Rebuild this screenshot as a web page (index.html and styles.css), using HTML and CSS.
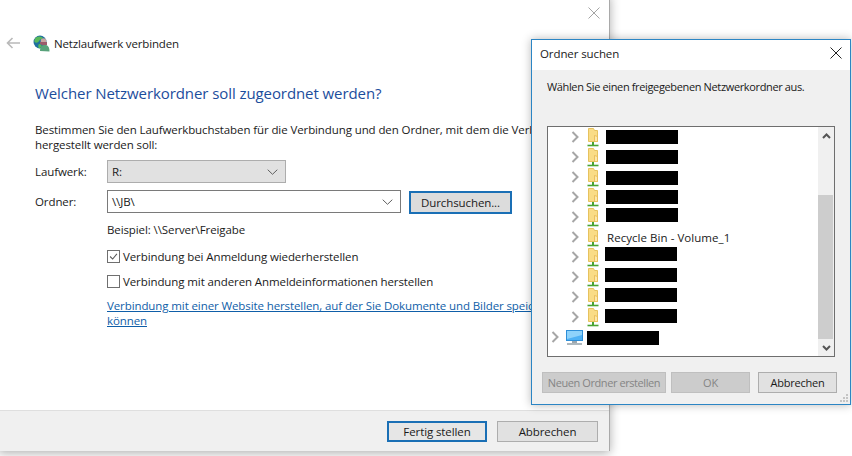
FILE: index.html
```html
<!DOCTYPE html>
<html lang="de">
<head>
<meta charset="utf-8">
<title>Netzlaufwerk verbinden</title>
<link rel="stylesheet" href="styles.css">
</head>
<body>
<svg class="defs" width="0" height="0">
  <symbol id="chev-r" viewBox="0 0 8 12"><path d="M1.5 1l5 5-5 5" fill="none" stroke="#a6a6a6" stroke-width="2"/></symbol>
  <symbol id="chev-d" viewBox="0 0 11 6"><path d="M.7.7l4.8 4.6L10.3.7" fill="none" stroke="#606060" stroke-width="1"/></symbol>
  <symbol id="x" viewBox="0 0 12 12"><path d="M.5.5l11 11M11.5.5l-11 11" fill="none" stroke="currentColor" stroke-width="1"/></symbol>
  <symbol id="share" viewBox="0 0 12 19">
    <path d="M1.5 .5h5l1 2h3v11h-9z" fill="#f9dc86" stroke="#e6c25e"/>
    <path d="M7.5 7.5l3 1v5h-3z" fill="#fbe9ad" stroke="#e8b84f" stroke-width=".8"/>
    <path d="M6 14v3" stroke="#4aa335" stroke-width="2"/>
    <path d="M.5 17.5h11" stroke="#4aa335" stroke-width="1.6"/>
  </symbol>
</svg>

<section class="wizard">
  <div class="wiz-cap"><svg class="wiz-x"><use href="#x"/></svg></div>
  <div class="wiz-nav">
    <svg class="back" viewBox="0 0 14 12"><path d="M6.5 1L1.5 6l5 5M1.5 6H14" fill="none" stroke="#b9b9b9" stroke-width="1.6"/></svg>
    <svg class="globe" viewBox="0 0 17 17">
      <circle cx="7" cy="7" r="6.5" fill="#1f6f9e"/>
      <path d="M3 2.5c3-2 6-1 7 .5-1 1.500-3 1-4 3S3 8 1.500 7C1 5 2 3.500 3 2.500zM6 9c2 0 3 1 2.500 3L6 13.500C5 12 5 10 6 9z" fill="#58b95a"/>
      <circle cx="10.500" cy="6" r="2.800" fill="#c9a5a0"/>
      <path d="M7 7h7v3l-3 1-4-2z" fill="#9b5a6b"/>
      <path d="M7 16c0-5 2.500-6 5-6s4.500 1.500 4.500 6.500z" fill="#58a27a"/>
    </svg>
    <span class="wiz-title">Netzlaufwerk verbinden</span>
  </div>
  <div class="wiz-body">
    <h1 class="heading">Welcher Netzwerkordner soll zugeordnet werden?</h1>
    <p class="desc">Bestimmen Sie den Laufwerkbuchstaben für die Verbindung und den Ordner, mit dem die Verbindung<br>hergestellt werden soll:</p>
    <div class="form-row form-row-first">
      <label class="form-label">Laufwerk:</label>
      <div class="combo combo-drive"><span>R:</span><svg class="combo-arrow"><use href="#chev-d"/></svg></div>
    </div>
    <div class="form-row">
      <label class="form-label">Ordner:</label>
      <div class="combo combo-path"><span>\\JB\</span><svg class="combo-arrow"><use href="#chev-d"/></svg></div>
      <button class="btn btn-browse" type="button">Durchsuchen...</button>
    </div>
    <div class="indent">
      <p class="hint">Beispiel: \\Server\Freigabe</p>
      <div class="check check-first">
        <span class="box"><svg viewBox="0 0 13 13"><path d="M2.500 6.500l3 3 5-6" fill="none" stroke="#5a5a5a" stroke-width="1.300"/></svg></span>
        <span>Verbindung bei Anmeldung wiederherstellen</span>
      </div>
      <div class="check">
        <span class="box"></span>
        <span>Verbindung mit anderen Anmeldeinformationen herstellen</span>
      </div>
      <a class="link" href="#">Verbindung mit einer Website herstellen, auf der Sie Dokumente und Bilder speichern<br>können</a>
    </div>
  </div>
  <div class="wiz-foot">
    <button class="btn btn-default" type="button">Fertig stellen</button>
    <button class="btn btn-cancel" type="button">Abbrechen</button>
  </div>
</section>

<section class="dialog">
  <div class="dlg-cap"><span>Ordner suchen</span><svg class="dlg-x"><use href="#x"/></svg></div>
  <div class="dlg-body">
    <p class="dlg-msg">Wählen Sie einen freigegebenen Netzwerkordner aus.</p>
    <div class="tree">
      <ul class="tree-list">
        <li class="row"><svg class="tw"><use href="#chev-r"/></svg><svg class="fld"><use href="#share"/></svg><span class="redact"></span></li>
        <li class="row"><svg class="tw"><use href="#chev-r"/></svg><svg class="fld"><use href="#share"/></svg><span class="redact"></span></li>
        <li class="row"><svg class="tw"><use href="#chev-r"/></svg><svg class="fld"><use href="#share"/></svg><span class="redact down1"></span></li>
        <li class="row"><svg class="tw"><use href="#chev-r"/></svg><svg class="fld"><use href="#share"/></svg><span class="redact"></span></li>
        <li class="row"><svg class="tw"><use href="#chev-r"/></svg><svg class="fld"><use href="#share"/></svg><span class="redact up2"></span></li>
        <li class="row"><svg class="tw"><use href="#chev-r"/></svg><svg class="fld"><use href="#share"/></svg><span class="row-text">Recycle Bin - Volume_1</span></li>
        <li class="row"><svg class="tw"><use href="#chev-r"/></svg><svg class="fld"><use href="#share"/></svg><span class="redact up3 left1"></span></li>
        <li class="row"><svg class="tw"><use href="#chev-r"/></svg><svg class="fld"><use href="#share"/></svg><span class="redact up2 left1"></span></li>
        <li class="row"><svg class="tw"><use href="#chev-r"/></svg><svg class="fld"><use href="#share"/></svg><span class="redact up2 left1"></span></li>
        <li class="row"><svg class="tw"><use href="#chev-r"/></svg><svg class="fld"><use href="#share"/></svg><span class="redact up1 left1"></span></li>
        <li class="row row-top"><svg class="tw"><use href="#chev-r"/></svg>
          <svg class="pc" viewBox="0 0 17 15">
            <rect x="0.500" y="0.500" width="16" height="10" fill="#4fb2f5" stroke="#2f8fd8"/>
            <path d="M1 1h15v4L1 9z" fill="#8fd3fb"/>
            <path d="M6 11h5v2H6z" fill="#9aa7b0"/>
            <path d="M1 14h15" stroke="#8c9aa3" stroke-width="1.400"/>
          </svg>
          <span class="redact down1"></span></li>
      </ul>
      <div class="scroll">
        <div class="sb-btn"><svg class="sb-up" viewBox="0 0 9 6"><path d="M1 5l3.500-3.500L8 5" fill="none" stroke="#555" stroke-width="2"/></svg></div>
        <div class="sb-space"></div>
        <div class="sb-thumb"></div>
        <div class="sb-btn"><svg class="sb-up" viewBox="0 0 9 6"><path d="M1 1l3.500 3.500L8 1" fill="none" stroke="#555" stroke-width="2"/></svg></div>
      </div>
    </div>
    <div class="dlg-btns">
      <button class="btn btn-off btn-new" type="button">Neuen Ordner erstellen</button>
      <button class="btn btn-off btn-ok" type="button">OK</button>
      <button class="btn btn-abort" type="button">Abbrechen</button>
    </div>
  </div>
  <svg class="grip" viewBox="0 0 9 9"><path d="M6 0h2v2H6zM3 3h2v2H3zM6 3h2v2H6zM0 6h2v2H0zM3 6h2v2H3zM6 6h2v2H6z" fill="#c4c4c4"/></svg>
</section>
</body>
</html>
```

FILE: styles.css
```css
* { box-sizing: border-box; }
html, body {
  margin: 0;
  width: 852px;
  height: 456px;
  overflow: hidden;
  background: #fff;
}
body {
  position: relative;
  font-family: "Open Sans", "Noto Sans", sans-serif;
  font-size: 11.500px;
  line-height: 15px;
  letter-spacing: -.1px;
  color: #1a1a1a;
}
p, h1, ul { margin: 0; padding: 0; }
.defs { position: absolute; }

/* Main wizard window */
.wizard {
  position: absolute;
  left: -2px;
  top: -6px;
  width: 612px;
  height: 457px;
  padding-top: 6px;
  padding-left: 2px;
  display: flex;
  flex-direction: column;
  background: #fff;
  border-right: 1px solid #a9a9a9;
  box-shadow: 0 2px 10px rgba(0, 0, 0, .32);
}
.wiz-cap {
  height: 33px;
  display: flex;
  justify-content: flex-end;
  padding: 7px 9px 0 0;
}
.wiz-x { width: 12px; height: 12px; color: #a4a4a4; }
.wiz-nav {
  height: 20px;
  display: flex;
  align-items: center;
  padding-left: 6px;
}
.back { width: 14px; height: 12px; margin-right: 13px; }
.globe { width: 17px; height: 17px; margin-right: 4px; }
.wiz-title { letter-spacing: -.16px; }
.wiz-body {
  flex: 1;
  padding: 30px 0 0 35px;
  white-space: nowrap;
}
.heading {
  font-size: 15px;
  font-weight: 400;
  line-height: 20px;
  letter-spacing: -.08px;
  color: #1c4d9c;
}
.desc { margin-top: 19px; }
.form-row {
  display: flex;
  align-items: flex-start;
  margin-top: 7px;
  height: 23px;
}
.form-row-first { margin-top: 8px; }
.form-label { width: 72px; line-height: 23px; }
.combo {
  height: 23px;
  display: flex;
  align-items: center;
  justify-content: space-between;
  padding: 0 7px 0 4px;
  border: 1px solid #7a7a7a;
  background: #fff;
}
.combo-drive { width: 179px; background: #e1e1e1; border-color: #adadad; }
.combo-path { width: 294px; }
.combo-arrow { width: 11px; height: 6px; }

.btn {
  font: inherit;
  letter-spacing: inherit;
  white-space: nowrap;
  color: #1a1a1a;
  padding: 0;
  background: #e1e1e1;
  border: 1px solid #adadad;
  border-radius: 0;
}
.btn-browse {
  width: 103px;
  height: 23px;
  margin: 1px 0 0 8px;
  border: 2px solid #1a6fb5;
  background: #dcdcdc;
}
.indent { padding-left: 72px; }
.hint { margin-top: 9px; }
.check {
  display: flex;
  align-items: center;
  gap: 3px;
  height: 15px;
  margin-top: 10px;
}
.check-first { margin-top: 12px; }
.box {
  width: 13px;
  height: 13px;
  border: 1px solid #6f6f6f;
  background: #fff;
  display: block;
}
.box svg { display: block; width: 11px; height: 11px; }
.link {
  display: block;
  margin-top: 9px;
  color: #0f5ea8;
  text-decoration: underline;
}
.wiz-foot {
  height: 41px;
  display: flex;
  justify-content: flex-end;
  gap: 10px;
  padding: 10px 11px 0 0;
  background: #f0f0f0;
  border-top: 1px solid #dfdfdf;
}
.btn-default {
  width: 100px;
  height: 21px;
  border: 2px solid #1a6fb5;
  background: #e6e6e6;
}
.btn-cancel { width: 101px; height: 21px; }

/* Folder picker */
.dialog {
  position: absolute;
  left: 531px;
  top: 39px;
  width: 320px;
  height: 366px;
  display: flex;
  flex-direction: column;
  background: #f0f0f0;
  border: 1px solid #2b85c4;
  box-shadow: 0 0 9px rgba(0, 0, 0, .28);
}
.dlg-cap {
  height: 30px;
  flex: none;
  background: #fff;
  display: flex;
  align-items: center;
  justify-content: space-between;
  padding: 0 8px 4px 8px;
}
.dlg-x { width: 12px; height: 12px; color: #222; }
.dlg-body { flex: 1; display: flex; flex-direction: column; }
.dlg-msg {
  margin: 9px 0 0 15px;
  font-size: 11px;
  letter-spacing: -.36px;
}
.tree {
  width: 288px;
  height: 231px;
  margin: 32px 0 0 15px;
  display: flex;
  background: #fff;
  border: 1px solid #6e6e6e;
}
.tree-list { flex: 1; list-style: none; min-width: 0; }
.row {
  height: 20px;
  display: flex;
  align-items: center;
  padding-left: 23px;
}
.row-top { padding-left: 3px; }
.tw { width: 8px; height: 12px; margin-right: 8px; flex: none; }
.row-top .tw { margin-right: 6px; }
.fld { width: 12px; height: 19px; margin-right: 7px; flex: none; }
.pc { width: 17px; height: 15px; margin: 0 4px 0 1px; flex: none; }
.row-text { margin-left: 1px; letter-spacing: .05px; }
.redact {
  position: relative;
  display: block;
  width: 72px;
  height: 14px;
  background: #000;
}
.down1 { top: 1px; }
.up1 { top: -1px; }
.up2 { top: -2px; }
.up3 { top: -3px; }
.left1 { margin-left: -1px; }
.scroll {
  width: 16px;
  display: flex;
  flex-direction: column;
  background: #f0f0f0;
}
.sb-btn {
  height: 17px;
  flex: none;
  display: flex;
  align-items: center;
  justify-content: center;
}
.sb-up { width: 9px; height: 6px; }
.sb-space { height: 51px; flex: none; }
.sb-thumb { flex: 1; background: #cdcdcd; margin-right: 1px; }
.dlg-btns {
  display: flex;
  margin-top: 15px;
  padding-left: 10px;
  font-size: 11px;
}
.dlg-btns .btn { height: 21px; }
.btn.btn-off { background: #cccccc; border-color: #bfbfbf; color: #858585; }
.btn-new { width: 124px; letter-spacing: -.42px; }
.btn-ok { width: 79px; margin-left: 5px; }
.btn-abort { width: 79px; margin-left: 8px; letter-spacing: -.2px; }
.grip {
  position: absolute;
  right: 1px;
  bottom: 1px;
  width: 9px;
  height: 9px;
}
```
